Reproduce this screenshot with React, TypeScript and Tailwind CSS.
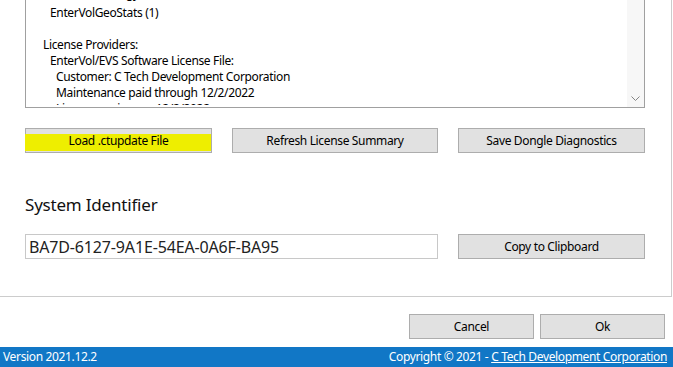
import React from "react";

const font = { fontFamily: '"Noto Sans", "Open Sans", sans-serif' };

function WinButton({ children, className = "" }: { children: React.ReactNode; className?: string }) {
  return (
    <button
      className={
        "h-[25px] border border-[#adadad] bg-[#e1e1e1] text-[12px] text-black flex items-center justify-center relative " +
        className
      }
    >
      {children}
    </button>
  );
}

export default function App() {
  const lines: { text: string; cls: string }[] = [
    { text: "EnterVolGeology (1000)", cls: "pl-[24px] h-[19px] items-start" },
    { text: "EnterVolGeoStats (1)", cls: "pl-[24px]" },
    { text: "\u00a0", cls: "" },
    { text: "License Providers:", cls: "pl-[17px]" },
    { text: "EnterVol/EVS Software License File:", cls: "pl-[24px]" },
    { text: "Customer: C Tech Development Corporation", cls: "pl-[30px]" },
    { text: "Maintenance paid through 12/2/2022", cls: "pl-[30px]" },
    { text: "License expires on 12/2/2022", cls: "pl-[30px]" },
  ];

  return (
    <div className="w-[673px] h-[367px] bg-white flex flex-col overflow-hidden text-black tracking-[-0.35px]" style={font}>
      {/* main panel */}
      <div className="w-[672px] h-[297px] border-r border-b border-[#cccccc] flex flex-col pl-[25px] pr-[26px]">
        {/* text box */}
        <div className="h-[108px] border-l border-r border-b border-[#a0a0a0] flex">
          <div className="flex-1 pb-[2px] flex flex-col">
            <div className="flex-1 overflow-hidden">
              <div className="mt-[-14px] text-[12px] leading-[16px]">
                {lines.map((l, i) => (
                  <div key={i} className={l.cls + " whitespace-nowrap flex"}>
                    <span className="leading-[16px]">{l.text}</span>
                  </div>
                ))}
              </div>
            </div>
          </div>
          <div className="w-[17px] bg-[#f7f7f7] flex flex-col justify-end items-center pb-[5px]">
            <svg width="9" height="6" viewBox="0 0 9 6">
              <path d="M0.5 0.5 L4.5 4.5 L8.5 0.5" fill="none" stroke="#858585" strokeWidth="1" />
            </svg>
          </div>
        </div>

        {/* button row */}
        <div className="mt-[20px] flex gap-[20px]">
          <WinButton className="w-[187px]">
            <span className="absolute left-[-1px] right-0 top-[5px] bottom-[1px] bg-[#eeee00]" />
            <span className="relative">Load .ctupdate File</span>
          </WinButton>
          <WinButton className="w-[206px]">Refresh License Summary</WinButton>
          <WinButton className="w-[187px]">Save Dongle Diagnostics</WinButton>
        </div>

        <div className="mt-[40px] text-[17px] leading-[24px] text-[#111] tracking-[-0.2px]">System Identifier</div>

        <div className="mt-[17px] flex gap-[20px]">
          <div className="w-[413px] h-[25px] border border-[#c8c8c8] text-[16px] tracking-[-0.15px] flex items-center pl-[3px] text-[#222]">
            BA7D-6127-9A1E-54EA-0A6F-BA95
          </div>
          <WinButton className="w-[187px]">Copy to Clipboard</WinButton>
        </div>
      </div>

      {/* dialog buttons */}
      <div className="flex justify-end gap-[6px] pr-[8px] mt-[17px]">
        <WinButton className="w-[125px]">Cancel</WinButton>
        <WinButton className="w-[125px]">Ok</WinButton>
      </div>

      {/* status bar */}
      <div className="mt-auto h-[20px] bg-[#1177c6] text-white text-[12px] flex items-center justify-between pl-[3px] pr-[6px]">
        <span>Version 2021.12.2</span>
        <span>
          Copyright © 2021 - <span className="underline">C Tech Development Corporation</span>
        </span>
      </div>
    </div>
  );
}
